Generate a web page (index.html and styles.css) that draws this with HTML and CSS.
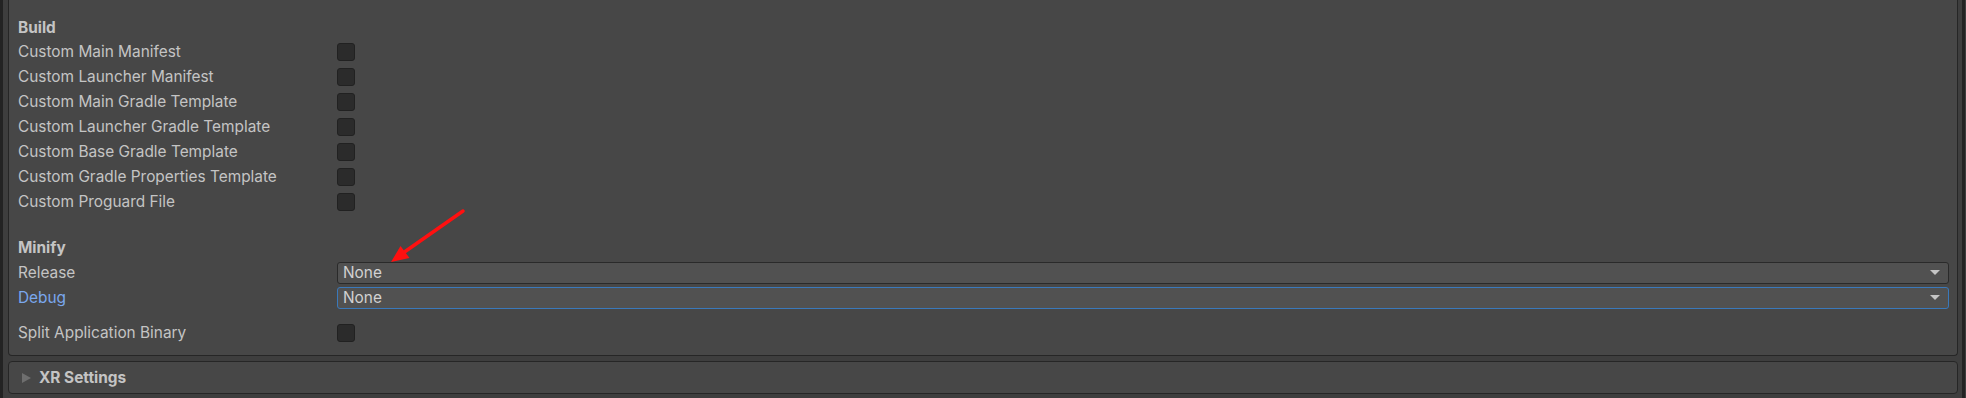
FILE: index.html
```html
<!DOCTYPE html>
<html>
<head>
<meta charset="utf-8">
<link rel="stylesheet" href="styles.css">
</head>
<body>
<div class="window">
  <div class="edge-left"></div>
  <div class="content">
    <div class="panel panel-main">
      <div class="header">Build</div>
      <div class="row"><span class="label">Custom Main Manifest</span><span class="checkbox"></span></div>
      <div class="row"><span class="label">Custom Launcher Manifest</span><span class="checkbox"></span></div>
      <div class="row"><span class="label">Custom Main Gradle Template</span><span class="checkbox"></span></div>
      <div class="row"><span class="label">Custom Launcher Gradle Template</span><span class="checkbox"></span></div>
      <div class="row"><span class="label">Custom Base Gradle Template</span><span class="checkbox"></span></div>
      <div class="row"><span class="label">Custom Gradle Properties Template</span><span class="checkbox"></span></div>
      <div class="row"><span class="label">Custom Proguard File</span><span class="checkbox"></span></div>
      <div class="header header-minify">Minify</div>
      <div class="row"><span class="label">Release</span><div class="dropdown"><span>None</span><span class="caret"></span></div></div>
      <div class="row"><span class="label label-focus">Debug</span><div class="dropdown dropdown-focus"><span>None</span><span class="caret"></span></div></div>
      <div class="row row-split"><span class="label">Split Application Binary</span><span class="checkbox"></span></div>
    </div>
    <div class="panel panel-xr">
      <span class="foldout"></span><span class="xr-title">XR Settings</span>
    </div>
  </div>
  <div class="edge-right"></div>
  <svg class="annotation" width="120" height="80" viewBox="380 200 120 80">
    <line x1="463" y1="211" x2="403" y2="253" stroke="#ff1010" stroke-width="3.5" stroke-linecap="round"/>
    <polygon points="391,262 400.5,246 409.5,258" fill="#ff1010"/>
  </svg>
</div>
</body>
</html>
```

FILE: styles.css
```css
html, body {
  margin: 0;
  padding: 0;
  background: #3e3e3e;
}
body {
  font-family: Inter, "Noto Sans", sans-serif;
  font-size: 15.4px;
  color: #c4c4c4;
}
.window {
  position: relative;
  display: flex;
  width: 1966px;
  height: 398px;
  overflow: hidden;
}
.edge-left {
  width: 3px;
  background: #232323;
}
.content {
  flex: 1;
  padding: 0 4px 0 5px;
  display: flex;
  flex-direction: column;
  gap: 5px;
}
.edge-right {
  width: 3px;
  margin-right: 1px;
  background: #232323;
}
.panel {
  background: #474747;
  border: 1px solid #262626;
  border-radius: 4px;
}
.panel-main {
  border-top: none;
  border-radius: 0 0 4px 4px;
  height: 356px;
  box-sizing: border-box;
  padding: 16px 8px 0 9px;
}
.header {
  height: 23px;
  line-height: 23px;
  font-weight: 700;
}
.header-minify {
  margin-top: 21px;
  height: 25px;
  line-height: 25px;
}
.row {
  height: 25px;
  display: flex;
  align-items: center;
}
.row-split {
  margin-top: 10px;
}
.label {
  width: 319px;
  flex: none;
  white-space: nowrap;
}
.label-focus {
  color: #7aa8ee;
}
.checkbox {
  width: 16px;
  height: 16px;
  background: #2b2b2b;
  border: 1px solid #212121;
  border-radius: 3px;
}
.dropdown {
  flex: 1;
  height: 20px;
  display: flex;
  align-items: center;
  justify-content: space-between;
  padding: 0 8px 0 5px;
  background: #515151;
  border: 1px solid #2a2a2a;
  border-radius: 3px;
  color: #d2d2d2;
}
.dropdown-focus {
  border-color: #3a79bb;
}
.caret {
  width: 0;
  height: 0;
  border-left: 5px solid transparent;
  border-right: 5px solid transparent;
  border-top: 5px solid #c4c4c4;
}
.panel-xr {
  height: 31px;
  display: flex;
  align-items: center;
  padding-left: 13px;
}
.foldout {
  width: 0;
  height: 0;
  border-top: 5.5px solid transparent;
  border-bottom: 5.5px solid transparent;
  border-left: 9px solid #6e6e6e;
  margin-right: 8px;
}
.xr-title {
  font-weight: 700;
}
.annotation {
  position: absolute;
  left: 380px;
  top: 200px;
}
```
